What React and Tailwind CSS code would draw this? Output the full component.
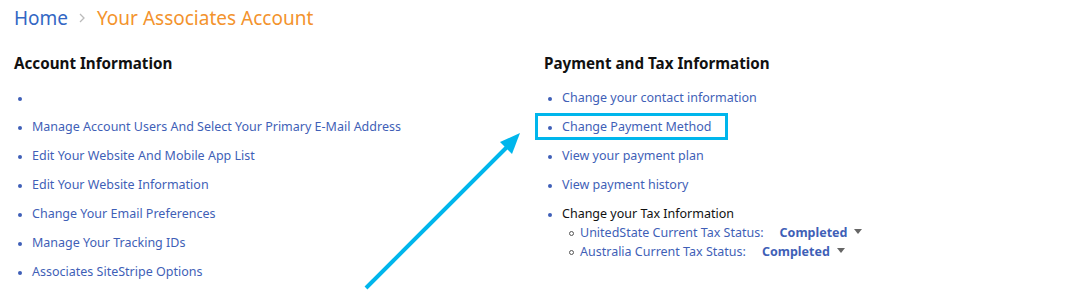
import React from "react";

const font = { fontFamily: '"Noto Sans", "Open Sans", sans-serif' };

function Item({ children, dark }) {
  return (
    <li className="flex items-center h-[19px]">
      <span className="w-[4px] h-[4px] rounded-full bg-[#3f5fb7] ml-[4px] mr-[10px] shrink-0" />
      <span className={dark ? "text-[#111111]" : "text-[#3f5fb7]"}>{children}</span>
    </li>
  );
}

function SubItem({ label, gap }) {
  return (
    <li className="flex items-center h-[19px]">
      <span className="w-[5px] h-[5px] rounded-full border border-[#555] ml-[7px] mr-[6px] shrink-0" />
      <span className="text-[#3f5fb7]">{label}</span>
      <span className={`font-bold text-[#3f5fb7] ${gap}`}>Completed</span>
      <svg width="8" height="5" viewBox="0 0 8 5" className="ml-[7px] mb-[4px]">
        <path d="M0 0 L8 0 L4 5 Z" fill="#666" />
      </svg>
    </li>
  );
}

export default function App() {
  return (
    <div className="relative w-[1066px] h-[305px] bg-white overflow-hidden" style={font}>
      <div className="flex items-center h-[20px] mt-[8px] pl-[14px] text-[19px]">
        <span className="text-[#3367c4]">Home</span>
        <svg width="6" height="10" viewBox="0 0 6 10" className="ml-[11px] mr-[12px]">
          <path d="M1 1 L5 5 L1 9" stroke="#bbbbbb" strokeWidth="1.3" fill="none" />
        </svg>
        <span className="text-[#f3932d]">Your Associates Account</span>
      </div>

      <div className="grid grid-cols-[530px_1fr] pl-[14px] mt-[25px] text-[12.5px]">
        <div>
          <h2 className="font-bold text-[15.2px] text-[#111111] h-[20px] leading-[20px]">Account Information</h2>
          <ul className="flex flex-col gap-[10px] mt-[16px]">
            <Item>{""}</Item>
            <Item>Manage Account Users And Select Your Primary E-Mail Address</Item>
            <Item>Edit Your Website And Mobile App List</Item>
            <Item>Edit Your Website Information</Item>
            <Item>Change Your Email Preferences</Item>
            <Item>Manage Your Tracking IDs</Item>
            <Item>Associates SiteStripe Options</Item>
          </ul>
        </div>
        <div>
          <h2 className="font-bold text-[15.2px] text-[#111111] h-[20px] leading-[20px]">Payment and Tax Information</h2>
          <ul className="flex flex-col gap-[10px] mt-[16px]">
            <Item>Change your contact information</Item>
            <li className="relative flex items-center h-[19px]">
              <span className="w-[4px] h-[4px] rounded-full bg-[#3f5fb7] ml-[4px] mr-[10px] shrink-0" />
              <span className="text-[#3f5fb7]">Change Payment Method</span>
              <span className="absolute left-[-9px] top-[-5px] w-[193px] h-[27px] border-[3px] border-[#00b6ec]" />
            </li>
            <Item>View your payment plan</Item>
            <Item>View payment history</Item>
            <li>
              <div className="flex items-center h-[19px]">
                <span className="w-[4px] h-[4px] rounded-full bg-[#3f5fb7] ml-[4px] mr-[10px] shrink-0" />
                <span className="text-[#111111]">Change your Tax Information</span>
              </div>
              <ul className="ml-[18px]">
                <SubItem label="UnitedState Current Tax Status:" gap="ml-[16px]" />
                <SubItem label="Australia Current Tax Status:" gap="ml-[16px]" />
              </ul>
            </li>
          </ul>
        </div>
      </div>

      <svg className="absolute left-0 top-0 pointer-events-none" width="1066" height="305" viewBox="0 0 1066 305">
        <line x1="366" y1="288" x2="508" y2="146" stroke="#00b6ec" strokeWidth="4" />
        <path d="M520 133 L500 142 L512 154 Z" fill="#00b6ec" />
      </svg>
    </div>
  );
}
